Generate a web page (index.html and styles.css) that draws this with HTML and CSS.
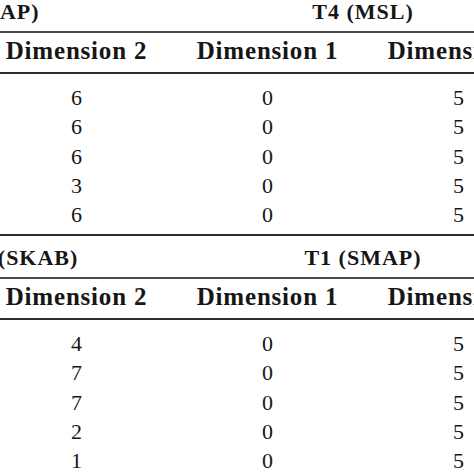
FILE: index.html
```html
<!DOCTYPE html>
<html lang="en">
<head>
<meta charset="utf-8">
<title>Dimension table</title>
<link rel="stylesheet" href="styles.css">
</head>
<body>
<div class="page">
  <section class="tbl tbl-first">
    <div class="row title-row">
      <div class="title span2">T3 (SMAP)</div>
      <div class="title span2">T4 (MSL)</div>
    </div>
    <div class="row head-row">
      <div class="head">Dimension 1</div>
      <div class="head">Dimension 2</div>
      <div class="head">Dimension 1</div>
      <div class="head">Dimension 2</div>
    </div>
    <div class="body">
      <div class="row data"><span>0</span><span>6</span><span>0</span><span>5</span></div>
      <div class="row data"><span>0</span><span>6</span><span>0</span><span>5</span></div>
      <div class="row data"><span>0</span><span>6</span><span>0</span><span>5</span></div>
      <div class="row data"><span>0</span><span>3</span><span>0</span><span>5</span></div>
      <div class="row data"><span>0</span><span>6</span><span>0</span><span>5</span></div>
    </div>
  </section>
  <section class="tbl">
    <div class="row title-row">
      <div class="title span2 shift">T2 (SKAB)</div>
      <div class="title span2">T1 (SMAP)</div>
    </div>
    <div class="row head-row">
      <div class="head">Dimension 1</div>
      <div class="head">Dimension 2</div>
      <div class="head">Dimension 1</div>
      <div class="head">Dimension 2</div>
    </div>
    <div class="body">
      <div class="row data"><span>0</span><span>4</span><span>0</span><span>5</span></div>
      <div class="row data"><span>0</span><span>7</span><span>0</span><span>5</span></div>
      <div class="row data"><span>0</span><span>7</span><span>0</span><span>5</span></div>
      <div class="row data"><span>0</span><span>2</span><span>0</span><span>5</span></div>
      <div class="row data"><span>0</span><span>1</span><span>0</span><span>5</span></div>
    </div>
  </section>
</div>
</body>
</html>
```
FILE: styles.css
```css
html, body {
  margin: 0;
  padding: 0;
  background: #ffffff;
  overflow: hidden;
}

body {
  font-family: "Liberation Serif", "Times New Roman", serif;
  color: #161616;
}

.page {
  margin-top: -10px;
  margin-left: -210px;
  width: 764px;
}

.row {
  display: grid;
  grid-template-columns: repeat(4, 191px);
}

.title-row {
  padding: 10px 0 7px;
  border-bottom: 2px solid #4a4a4a;
}

.title {
  font-size: 22px;
  font-weight: bold;
  letter-spacing: 1px;
  line-height: 24px;
  text-align: center;
}

.span2 {
  grid-column: span 2;
}

.shift {
  padding-left: 80px;
}

.head-row {
  padding: 4px 0 7px;
  border-bottom: 2px solid #2e2e2e;
}

.head {
  font-size: 25px;
  font-weight: bold;
  letter-spacing: 0.8px;
  line-height: 28px;
  text-align: center;
}

.body {
  padding: 9px 0 4.5px;
  border-bottom: 2px solid #2a2a2a;
}

.data span {
  font-size: 22px;
  line-height: 29.3px;
  text-align: center;
}
```
